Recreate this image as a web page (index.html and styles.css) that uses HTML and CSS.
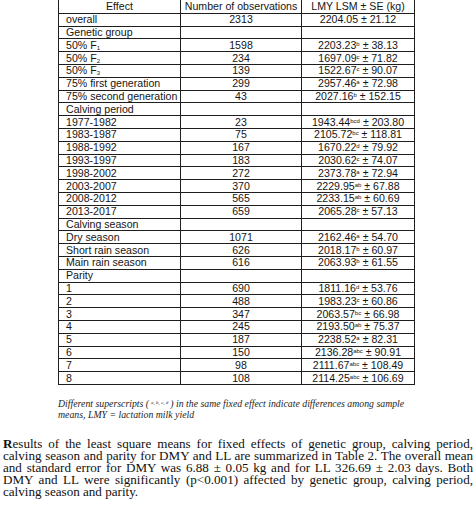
FILE: index.html
```html
<!DOCTYPE html>
<html>
<head>
<meta charset="utf-8">
<link rel="stylesheet" href="styles.css">
</head>
<body>
<div class="page">
  <div class="figure">
    <table class="lsm">
      <colgroup>
        <col class="c1"><col class="c2"><col class="c3">
      </colgroup>
      <thead>
        <tr><th>Effect</th><th>Number of observations</th><th>LMY LSM ± SE (kg)</th></tr>
      </thead>
      <tbody>
        <tr><td>overall</td><td>2313</td><td>2204.05 ± 21.12</td></tr>
        <tr><td>Genetic group</td><td></td><td></td></tr>
        <tr><td>50% F<sub>1</sub></td><td>1598</td><td>2203.23<sup>b</sup> ± 38.13</td></tr>
        <tr><td>50% F<sub>2</sub></td><td>234</td><td>1697.09<sup>c</sup> ± 71.82</td></tr>
        <tr><td>50% F<sub>3</sub></td><td>139</td><td>1522.67<sup>c</sup> ± 90.07</td></tr>
        <tr><td>75% first generation</td><td>299</td><td>2957.46<sup>a</sup> ± 72.98</td></tr>
        <tr><td>75% second generation</td><td>43</td><td>2027.16<sup>b</sup> ± 152.15</td></tr>
        <tr><td>Calving period</td><td></td><td></td></tr>
        <tr><td>1977-1982</td><td>23</td><td>1943.44<sup>bcd</sup> ± 203.80</td></tr>
        <tr><td>1983-1987</td><td>75</td><td>2105.72<sup>bc</sup> ± 118.81</td></tr>
        <tr><td>1988-1992</td><td>167</td><td>1670.22<sup>d</sup> ± 79.92</td></tr>
        <tr><td>1993-1997</td><td>183</td><td>2030.62<sup>c</sup> ± 74.07</td></tr>
        <tr><td>1998-2002</td><td>272</td><td>2373.78<sup>a</sup> ± 72.94</td></tr>
        <tr><td>2003-2007</td><td>370</td><td>2229.95<sup>ab</sup> ± 67.88</td></tr>
        <tr><td>2008-2012</td><td>565</td><td>2233.15<sup>ab</sup> ± 60.69</td></tr>
        <tr><td>2013-2017</td><td>659</td><td>2065.28<sup>c</sup> ± 57.13</td></tr>
        <tr><td>Calving season</td><td></td><td></td></tr>
        <tr><td>Dry season</td><td>1071</td><td>2162.46<sup>a</sup> ± 54.70</td></tr>
        <tr><td>Short rain season</td><td>626</td><td>2018.17<sup>b</sup> ± 60.97</td></tr>
        <tr><td>Main rain season</td><td>616</td><td>2063.93<sup>b</sup> ± 61.55</td></tr>
        <tr><td>Parity</td><td></td><td></td></tr>
        <tr><td>1</td><td>690</td><td>1811.16<sup>d</sup> ± 53.76</td></tr>
        <tr><td>2</td><td>488</td><td>1983.23<sup>c</sup> ± 60.86</td></tr>
        <tr><td>3</td><td>347</td><td>2063.57<sup>bc</sup> ± 66.98</td></tr>
        <tr><td>4</td><td>245</td><td>2193.50<sup>ab</sup> ± 75.37</td></tr>
        <tr><td>5</td><td>187</td><td>2238.52<sup>a</sup> ± 82.31</td></tr>
        <tr><td>6</td><td>150</td><td>2136.28<sup>abc</sup> ± 90.91</td></tr>
        <tr><td>7</td><td>98</td><td>2111.67<sup>abc</sup> ± 108.49</td></tr>
        <tr><td>8</td><td>108</td><td>2114.25<sup>abc</sup> ± 106.69</td></tr>
      </tbody>
    </table>
    <p class="caption">Different superscripts (<sup>a, b, c, d</sup>) in the same fixed effect indicate differences among sample means, LMY = lactation milk yield</p>
  </div>
  <p class="body-text">Results of the least square means for fixed effects of genetic group, calving period, calving season and parity for DMY and LL are summarized in Table 2. The overall mean and standard error for DMY was 6.88 ± 0.05 kg and for LL 326.69 ± 2.03 days. Both DMY and LL were significantly (p&lt;0.001) affected by genetic group, calving period, calving season and parity.</p>
</div>
</body>
</html>
```

FILE: styles.css
```css
html, body {
  margin: 0;
  padding: 0;
  background: #ffffff;
}

.page {
  width: 474px;
  height: 510px;
  overflow: hidden;
}

.figure {
  padding-left: 58px;
}

.lsm {
  border-collapse: collapse;
  table-layout: fixed;
  width: 356px;
  font-family: "Liberation Sans Narrow", "Liberation Sans", Arial, sans-serif;
  font-size: 10.6px;
  color: #151515;
}

.c1 { width: 122px; }
.c2 { width: 121px; }
.c3 { width: 113px; }

.lsm th,
.lsm td {
  border: 1px solid #1e1e1e;
  padding: 0;
  line-height: 11px;
  font-weight: normal;
  white-space: nowrap;
  overflow: visible;
}

.lsm th {
  border-top: none;
  text-align: center;
}

.lsm thead tr { height: 13.3px; }
.lsm tbody tr { height: 12.8px; }

.lsm td:first-child {
  text-align: left;
  padding-left: 7px;
}

.lsm td:nth-child(2),
.lsm td:nth-child(3) {
  text-align: center;
}

.lsm sup {
  font-size: 6px;
  vertical-align: 3px;
  line-height: 0;
}

.lsm sub {
  font-size: 6px;
  vertical-align: -1px;
  line-height: 0;
}

.caption {
  margin: 13px 0 0 0;
  width: 364px;
  font-family: "Liberation Serif", "Times New Roman", serif;
  font-style: italic;
  font-size: 9.8px;
  line-height: 11.5px;
  color: #1e1e1e;
}

.caption sup {
  font-size: 5px;
  vertical-align: 3px;
  line-height: 0;
  padding: 0 2px 0 2px;
}

.body-text {
  margin: 17px 0 0 3px;
  width: 470px;
  font-family: "Liberation Serif", "Times New Roman", serif;
  font-size: 13.1px;
  line-height: 12px;
  text-align: justify;
  color: #111;
}

.body-text::first-letter {
  font-weight: bold;
}
```
